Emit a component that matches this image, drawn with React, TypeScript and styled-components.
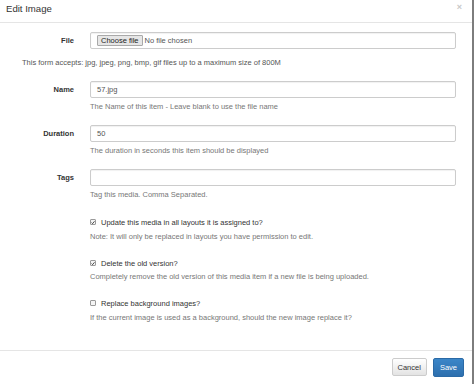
import React from "react"
import styled, { createGlobalStyle } from "styled-components"

const GlobalStyle = createGlobalStyle`
  html, body {
    margin: 0;
    padding: 0;
    background: #ffffff;
  }
  body {
    font-family: "Liberation Sans", Arial, Helvetica, sans-serif;
    color: #333333;
  }
`

const Page = styled.div`
  display: flex;
  width: 474px;
  height: 384px;
  overflow: hidden;
`

const Modal = styled.div`
  display: flex;
  flex-direction: column;
  width: 472px;
  height: 384px;
  background: #ffffff;
`

const EdgeStrip = styled.div`
  width: 2px;
  background: #7d7d7d;
`

const Header = styled.div`
  display: flex;
  align-items: flex-start;
  justify-content: space-between;
  box-sizing: border-box;
  height: 23px;
  padding: 2px 10px 0 6px;
  border-bottom: 1px solid #e5e5e5;
`

const Title = styled.h4`
  margin: 0;
  font-size: 9.6px;
  line-height: 13px;
  font-weight: normal;
  color: #333333;
`

const Close = styled.span`
  font-size: 9px;
  font-weight: bold;
  line-height: 11px;
  color: #c8c8c8;
`

const Body = styled.div`
  flex: 1;
  padding: 9px 16px 0 0;
`

const Row = styled.div<{ $gap?: number }>`
  display: grid;
  grid-template-columns: 74px 1fr;
  column-gap: 16px;
  align-items: start;
  margin-bottom: ${({ $gap }) => $gap ?? 0}px;
`

const Label = styled.label`
  font-size: 7.5px;
  font-weight: bold;
  text-align: right;
  line-height: 17px;
  color: #333333;
`

const Field = styled.div`
  display: flex;
  flex-direction: column;
`

const Input = styled.div`
  box-sizing: border-box;
  height: 17px;
  display: flex;
  align-items: center;
  gap: 2px;
  padding: 0 6px;
  border: 1px solid #cccccc;
  border-radius: 2px;
  box-shadow: inset 0 1px 1px rgba(0, 0, 0, 0.06);
  font-size: 7.5px;
  color: #555555;
`

const FileButton = styled.span`
  display: inline-flex;
  align-items: center;
  height: 9px;
  padding: 0 3px;
  background: #e6e6e6;
  border: 1px solid #a9a9a9;
  border-radius: 1px;
  color: #222222;
  font-size: 7.5px;
`

const Help = styled.div<{ $top?: number }>`
  margin-top: ${({ $top }) => $top ?? 4}px;
  font-size: 7.5px;
  line-height: 10px;
  color: #777777;
`

const Accepts = styled.div`
  margin: 9px 0 13px 22px;
  font-size: 7.5px;
  line-height: 10px;
  color: #555555;
`

const CheckGroup = styled.div<{ $gap: number }>`
  margin-left: 90px;
  margin-bottom: ${({ $gap }) => $gap}px;
`

const CheckLine = styled.label`
  display: flex;
  align-items: center;
  gap: 5px;
  height: 10px;
  font-size: 7.5px;
  color: #333333;
`

const Box = styled.span`
  box-sizing: border-box;
  width: 6px;
  height: 6px;
  border: 1px solid #9a9a9a;
  border-radius: 1px;
  background: #f4f4f4;
  display: inline-flex;
  align-items: center;
  justify-content: center;
`

const Footer = styled.div`
  display: flex;
  justify-content: flex-end;
  align-items: center;
  gap: 6px;
  height: 32px;
  padding: 0 8px 1px 0;
  border-top: 1px solid #e5e5e5;
`

const Button = styled.span<{ $primary?: boolean }>`
  display: inline-flex;
  align-items: center;
  justify-content: center;
  box-sizing: border-box;
  height: ${({ $primary }) => ($primary ? 19 : 18)}px;
  padding: 0 ${({ $primary }) => ($primary ? 6 : 5)}px;
  border-radius: 2px;
  font-size: 7.5px;
  border: 1px solid ${({ $primary }) => ($primary ? "#2b6aa6" : "#cccccc")};
  color: ${({ $primary }) => ($primary ? "#ffffff" : "#333333")};
  background: ${({ $primary }) =>
    $primary
      ? "linear-gradient(#3b86c8, #2d6fae)"
      : "linear-gradient(#ffffff, #e3e3e3)"};
`

function Check({ checked }: { checked?: boolean }) {
  return (
    <Box>
      {checked && (
        <svg width="5" height="5" viewBox="0 0 10 10">
          <path d="M1.5 5.2 L4 7.8 L8.8 2" fill="none" stroke="#222" strokeWidth="2" />
        </svg>
      )}
    </Box>
  )
}

export default function App() {
  return (
    <Page>
      <GlobalStyle />
      <Modal>
        <Header>
          <Title>Edit Image</Title>
          <Close>×</Close>
        </Header>
        <Body>
          <Row>
            <Label>File</Label>
            <Input>
              <FileButton>Choose file</FileButton>
              <span>No file chosen</span>
            </Input>
          </Row>
          <Accepts>
            This form accepts: jpg, jpeg, png, bmp, gif files up to a maximum size of 800M
          </Accepts>
          <Row $gap={13}>
            <Label>Name</Label>
            <Field>
              <Input>57.jpg</Input>
              <Help>The Name of this item - Leave blank to use the file name</Help>
            </Field>
          </Row>
          <Row $gap={13}>
            <Label>Duration</Label>
            <Field>
              <Input>50</Input>
              <Help>The duration in seconds this item should be displayed</Help>
            </Field>
          </Row>
          <Row $gap={17}>
            <Label>Tags</Label>
            <Field>
              <Input />
              <Help>Tag this media. Comma Separated.</Help>
            </Field>
          </Row>
          <CheckGroup $gap={16}>
            <CheckLine>
              <Check checked />
              Update this media in all layouts it is assigned to?
            </CheckLine>
            <Help $top={5}>Note: It will only be replaced in layouts you have permission to edit.</Help>
          </CheckGroup>
          <CheckGroup $gap={16}>
            <CheckLine>
              <Check checked />
              Delete the old version?
            </CheckLine>
            <Help $top={4}>Completely remove the old version of this media item if a new file is being uploaded.</Help>
          </CheckGroup>
          <CheckGroup $gap={0}>
            <CheckLine>
              <Check />
              Replace background images?
            </CheckLine>
            <Help $top={5}>If the current image is used as a background, should the new image replace it?</Help>
          </CheckGroup>
        </Body>
        <Footer>
          <Button>Cancel</Button>
          <Button $primary>Save</Button>
        </Footer>
      </Modal>
      <EdgeStrip />
    </Page>
  )
}
